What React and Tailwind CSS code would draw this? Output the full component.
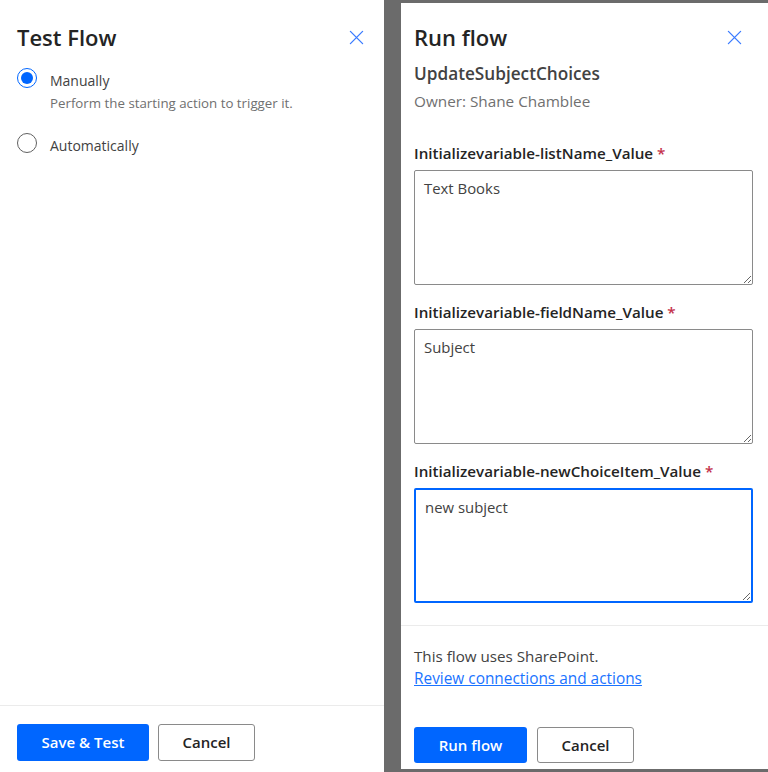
import React from "react";

const font = { fontFamily: '"Open Sans", "Noto Sans", sans-serif' };

function CloseIcon() {
  return (
    <svg width="15" height="15" viewBox="0 0 16 16" fill="none" className="text-[#3a7bff]">
      <path d="M1.5 1.5 L14.5 14.5 M14.5 1.5 L1.5 14.5" stroke="currentColor" strokeWidth="1.4" strokeLinecap="round" />
    </svg>
  );
}

function Radio({ checked, label, desc }) {
  return (
    <div className="flex items-start gap-[13px]">
      <span
        className={`flex h-[20px] w-[20px] shrink-0 items-center justify-center rounded-full border ${
          checked ? "border-[#0066ff]" : "border-[#616161]"
        }`}
      >
        {checked && <span className="h-[12px] w-[12px] rounded-full bg-[#0066ff]" />}
      </span>
      <div className="mt-[2px]">
        <div className="text-[14px] leading-[22px] text-[#424242]">{label}</div>
        {desc && <div className="mt-[2px] text-[13.3px] leading-[18px] text-[#707070]">{desc}</div>}
      </div>
    </div>
  );
}

function Field({ label, value, focused, first }) {
  return (
    <div className={first ? "mt-[32px]" : "mt-[17px]"}>
      <div className="text-[15.2px] font-semibold leading-[20px] text-[#242424]">
        {label} <span className="text-[#c4314b]">*</span>
      </div>
      <textarea
        defaultValue={value}
        className={`mt-[7px] block h-[115px] w-[339px] rounded-[2px] px-[9px] py-[6px] text-[14.9px] leading-[22px] text-[#424242] outline-none ${
          focused ? "border-2 border-[#0066ff]" : "border border-[#8a8a8a]"
        }`}
        style={font}
      />
    </div>
  );
}

export default function App() {
  return (
    <div className="flex h-[772px] w-[768px] bg-[#6b6b6b]" style={font}>
      {/* Test Flow panel */}
      <div className="flex h-full w-[384px] flex-col bg-white">
        <div className="flex items-center justify-between pl-[17px] pr-[20px] pt-[23px]">
          <h1 className="text-[22px] font-semibold leading-[28px] text-[#242424]">Test Flow</h1>
          <CloseIcon />
        </div>
        <div className="mt-[17px] flex flex-col gap-[21px] px-[17px]">
          <Radio checked label="Manually" desc="Perform the starting action to trigger it." />
          <Radio label="Automatically" />
        </div>
        <div className="flex-1" />
        <div className="flex gap-[9px] border-t border-[#ebebeb] px-[17px] pb-[11px] pt-[18px]">
          <button className="h-[37px] w-[132px] rounded-[3px] bg-[#0066ff] text-[15px] font-semibold text-white">
            Save &amp; Test
          </button>
          <button className="h-[37px] w-[97px] rounded-[3px] border border-[#8a8a8a] bg-white text-[15px] font-semibold text-[#242424]">
            Cancel
          </button>
        </div>
      </div>

      {/* Run flow panel */}
      <div className="mb-[3px] ml-[17px] mt-[3px] flex flex-1 flex-col bg-white">
        <div className="px-[13px] pt-[20px]">
          <div className="flex items-center justify-between pr-[13px]">
            <h1 className="text-[22px] font-semibold leading-[28px] text-[#242424]">Run flow</h1>
            <CloseIcon />
          </div>
          <div className="mt-[12px] text-[17.2px] font-semibold leading-[22px] text-[#424242]">UpdateSubjectChoices</div>
          <div className="mt-[6px] text-[15.3px] leading-[20px] text-[#707070]">Owner: Shane Chamblee</div>
          <Field first label="Initializevariable-listName_Value" value="Text Books" />
          <Field label="Initializevariable-fieldName_Value" value="Subject" />
          <Field focused label="Initializevariable-newChoiceItem_Value" value="new subject" />
        </div>
        <div className="mt-[22px] border-t border-[#ebebeb] px-[13px] pt-[20px]">
          <div className="text-[15.2px] leading-[20px] text-[#424242]">This flow uses SharePoint.</div>
          <a href="#" className="mt-[3px] block text-[15.4px] leading-[20px] text-[#1a73ff] underline">
            Review connections and actions
          </a>
          <div className="mt-[38px] flex gap-[10px]">
            <button className="h-[36px] w-[113px] rounded-[3px] bg-[#0066ff] text-[15px] font-semibold text-white">
              Run flow
            </button>
            <button className="h-[36px] w-[97px] rounded-[3px] border border-[#8a8a8a] bg-white text-[15px] font-semibold text-[#242424]">
              Cancel
            </button>
          </div>
        </div>
      </div>
    </div>
  );
}
